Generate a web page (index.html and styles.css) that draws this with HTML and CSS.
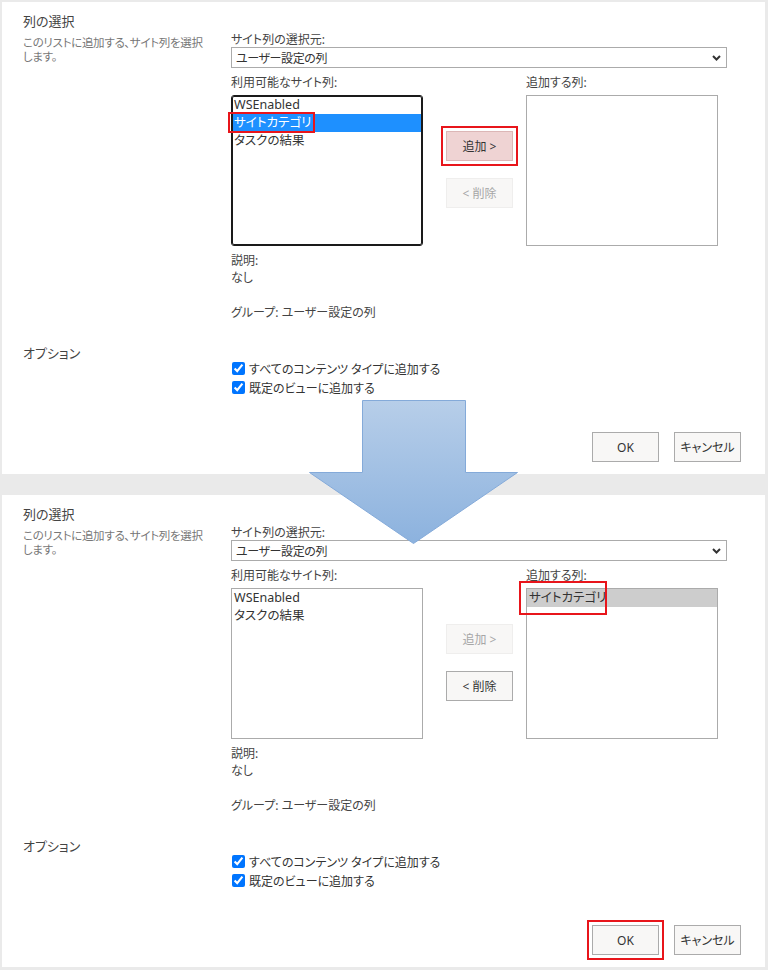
FILE: index.html
```html
<!DOCTYPE html>
<html lang="ja">
<head>
<meta charset="UTF-8">
<meta name="viewport" content="width=device-width, initial-scale=1.0">
<title>列の選択</title>
<link rel="stylesheet" href="styles.css">
</head>
<body>
<div class="page">

  <!-- before: item picked in the left list -->
  <section class="panel">
    <div class="section">
      <div class="side">
        <h2 class="side-title">列の選択</h2>
        <p class="side-desc">このリストに追加する、サイト列を選択<br>します。</p>
      </div>
      <div class="main">
        <div class="field-label">サイト列の選択元:</div>
        <div class="select">
          <span>ユーザー設定の列</span>
          <svg class="chevron" width="9" height="6" viewBox="0 0 9 6"><path d="M1 1 L4.5 4.5 L8 1" fill="none" stroke="#333" stroke-width="2"/></svg>
        </div>
        <div class="picker">
          <div class="pick-col">
            <div class="field-label">利用可能なサイト列:</div>
            <ul class="listbox focused">
              <li>WSEnabled</li>
              <li class="selected"><span class="mark mark-tight">サイトカテゴリ</span></li>
              <li>タスクの結果</li>
            </ul>
          </div>
          <div class="pick-buttons">
            <button class="btn btn-hot">追加 &gt;</button>
            <button class="btn" disabled>&lt; 削除</button>
          </div>
          <div class="pick-col">
            <div class="field-label">追加する列:</div>
            <ul class="listbox"></ul>
          </div>
        </div>
        <div class="info">
          <div>説明:</div>
          <div>なし</div>
          <div class="group">グループ: ユーザー設定の列</div>
        </div>
      </div>
    </div>
    <div class="section options">
      <div class="side">
        <h2 class="side-title">オプション</h2>
      </div>
      <div class="main">
        <label class="check"><input type="checkbox" checked>すべてのコンテンツ タイプに追加する</label>
        <label class="check"><input type="checkbox" checked>既定のビューに追加する</label>
      </div>
    </div>
    <div class="footer">
      <button class="btn">OK</button>
      <button class="btn">キャンセル</button>
    </div>
  </section>

  <!-- after: item moved to the right list -->
  <section class="panel">
    <div class="section">
      <div class="side">
        <h2 class="side-title">列の選択</h2>
        <p class="side-desc">このリストに追加する、サイト列を選択<br>します。</p>
      </div>
      <div class="main">
        <div class="field-label">サイト列の選択元:</div>
        <div class="select">
          <span>ユーザー設定の列</span>
          <svg class="chevron" width="9" height="6" viewBox="0 0 9 6"><path d="M1 1 L4.5 4.5 L8 1" fill="none" stroke="#333" stroke-width="2"/></svg>
        </div>
        <div class="picker">
          <div class="pick-col">
            <div class="field-label">利用可能なサイト列:</div>
            <ul class="listbox">
              <li>WSEnabled</li>
              <li>タスクの結果</li>
            </ul>
          </div>
          <div class="pick-buttons">
            <button class="btn" disabled>追加 &gt;</button>
            <button class="btn">&lt; 削除</button>
          </div>
          <div class="pick-col">
            <div class="field-label">追加する列:</div>
            <ul class="listbox">
              <li class="selected-dim"><span class="mark mark-loose">サイトカテゴリ</span></li>
            </ul>
          </div>
        </div>
        <div class="info">
          <div>説明:</div>
          <div>なし</div>
          <div class="group">グループ: ユーザー設定の列</div>
        </div>
      </div>
    </div>
    <div class="section options">
      <div class="side">
        <h2 class="side-title">オプション</h2>
      </div>
      <div class="main">
        <label class="check"><input type="checkbox" checked>すべてのコンテンツ タイプに追加する</label>
        <label class="check"><input type="checkbox" checked>既定のビューに追加する</label>
      </div>
    </div>
    <div class="footer">
      <button class="btn btn-marked">OK</button>
      <button class="btn">キャンセル</button>
    </div>
  </section>

  <svg class="arrow" width="210" height="145" viewBox="0 0 210 145">
    <defs>
      <linearGradient id="arrowFill" x1="0" y1="0" x2="0" y2="1">
        <stop offset="0" stop-color="#b7cee9"/>
        <stop offset="1" stop-color="#8cb2de"/>
      </linearGradient>
    </defs>
    <path d="M53.5 0.5 H156.5 V72.5 H208.5 L104.5 143.5 L0.5 72.5 H53.5 Z" fill="url(#arrowFill)" stroke="#84aad9" stroke-width="1"/>
  </svg>
</div>
</body>
</html>
```

FILE: styles.css
```css
body {
  margin: 0;
  background: #eaeaea;
  font-family: "Noto Sans", "Noto Sans CJK JP", sans-serif;
  font-feature-settings: "palt";
  font-size: 12px;
  color: #444;
}

.page {
  position: relative;
  padding: 2px 3px 0 2px;
}

.panel {
  display: flex;
  flex-direction: column;
  height: 472px;
  box-sizing: border-box;
  margin-bottom: 21px;
  padding: 10px 0 12px 21px;
  background: #fff;
}

.section {
  display: grid;
  grid-template-columns: 208px 1fr;
}

.side-title {
  margin: 0;
  font-size: 13px;
  font-weight: normal;
  line-height: 18px;
  color: #444;
}

.side-desc {
  margin: 6px 0 0;
  font-size: 11.5px;
  line-height: 14px;
  color: #777;
  letter-spacing: -0.3px;
}

.main {
  padding-top: 21px;
}

.field-label {
  line-height: 14px;
  font-size: 12px;
}

.select {
  display: flex;
  align-items: center;
  justify-content: space-between;
  width: 496px;
  height: 21px;
  box-sizing: border-box;
  border: 1px solid #ababab;
  padding: 0 5px 0 4px;
  font-size: 12px;
  letter-spacing: -0.4px;
  color: #333;
}

.chevron {
  display: block;
}

.picker {
  display: flex;
  align-items: flex-start;
  margin-top: 8px;
}

.listbox {
  list-style: none;
  margin: 5px 0 0;
  padding: 0;
  width: 192px;
  height: 151px;
  box-sizing: border-box;
  border: 1px solid #ababab;
  font-size: 12.5px;
  color: #333;
}

.listbox li {
  height: 18px;
  line-height: 18px;
  padding-left: 2px;
  white-space: nowrap;
}

.listbox.focused {
  border-color: #1a1a1a;
  border-radius: 3px;
  outline: 1px solid #1a1a1a;
  outline-offset: -2px;
}

.listbox li.selected {
  background: #1e90ff;
  color: #fff;
}

.listbox li.selected-dim {
  background: #cdcdcd;
  color: #333;
}

/* red annotation frames */
.mark {
  position: relative;
  display: inline-block;
}

.mark::after {
  content: "";
  position: absolute;
  border: 2px solid #e8151b;
}

.mark-tight::after {
  left: -6px;
  right: -4px;
  top: -2px;
  bottom: -1px;
}

.mark-loose::after {
  left: -10px;
  right: -1px;
  top: -8px;
  bottom: -8px;
}

.pick-buttons {
  display: flex;
  flex-direction: column;
  gap: 17px;
  margin: 55px 13px 0 23px;
}

.btn {
  width: 67px;
  height: 30px;
  box-sizing: border-box;
  border: 1px solid #ababab;
  background: #f8f7f6;
  font-family: inherit;
  font-feature-settings: "palt";
  font-size: 12px;
  color: #333;
  padding: 0;
}

.btn:disabled {
  border-color: #efeeed;
  color: #a6a6a6;
}

.btn-hot {
  background: #efd3d3;
  border-color: #dcb6b6;
  outline: 2px solid #e8151b;
  outline-offset: 3px;
}

.btn-marked {
  outline: 2px solid #e8151b;
  outline-offset: 3px;
}

.info {
  margin-top: 6px;
  line-height: 17px;
}

.info .group {
  margin-top: 18px;
}

.options {
  margin-top: 23px;
}

.options .main {
  padding-top: 15px;
}

.check {
  display: flex;
  align-items: center;
  height: 19px;
  color: #333;
}

.check input {
  width: 13px;
  height: 13px;
  margin: 0 4px 0 1px;
}

.footer {
  display: flex;
  justify-content: flex-end;
  gap: 15px;
  margin-top: auto;
  padding-right: 24px;
}

.arrow {
  position: absolute;
  left: 309px;
  top: 400px;
}
```
